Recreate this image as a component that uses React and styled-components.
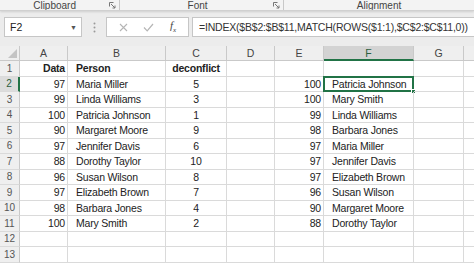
import React from "react";
import styled, { createGlobalStyle } from "styled-components";

const GlobalStyle = createGlobalStyle`
  html, body {
    margin: 0;
    padding: 0;
    background: #ececec;
    overflow: hidden;
  }
  * { box-sizing: border-box; }
`;

const Page = styled.div`
  width: 474px;
  height: 263px;
  overflow: hidden;
  font-family: "Liberation Sans", Arial, sans-serif;
  background: #ececec;
`;

const Ribbon = styled.div`
  height: 11px;
  background: #f3f3f3;
  border-bottom: 1px solid #d0d0d0;
  box-shadow: 0 1px 2px rgba(0, 0, 0, 0.12);
  display: flex;
  align-items: flex-end;
  overflow: hidden;
`;

const Group = styled.div`
  width: ${(p) => p.width}px;
  height: 11px;
  position: relative;
  display: flex;
  align-items: flex-end;
  justify-content: center;
  padding-right: ${(p) => p.shift || 0}px;
  border-right: ${(p) => (p.sep ? "1px solid #c8c8c8" : "none")};
`;

const GroupLabel = styled.span`
  font-size: 10px;
  line-height: 10px;
  color: #444;
  transform: translateY(1px);
`;

const Launcher = styled.span`
  position: absolute;
  right: 3px;
  bottom: 1px;
  display: flex;
`;

const FormulaBar = styled.div`
  height: 35px;
  display: flex;
  align-items: flex-start;
  padding: 6px 0 0 4px;
`;

const NameBox = styled.div`
  width: 78px;
  height: 20px;
  background: #fff;
  border: 1px solid #c6c6c6;
  display: flex;
  align-items: center;
  justify-content: space-between;
  padding: 0 4px 0 5px;
  font-size: 10.5px;
  color: #222;
`;

const Caret = styled.span`
  font-size: 7px;
  color: #555;
`;

const Dots = styled.div`
  width: 24px;
  height: 20px;
  display: flex;
  align-items: center;
  justify-content: center;
`;

const ButtonBox = styled.div`
  width: 83px;
  height: 20px;
  background: #fff;
  border: 1px solid #c6c6c6;
  display: flex;
  align-items: center;
  justify-content: space-around;
  padding: 0 4px;
  margin-right: 3px;
`;

const Fx = styled.span`
  font-family: "Liberation Serif", serif;
  font-style: italic;
  font-size: 11px;
  color: #444;
  & sub { font-size: 7px; }
`;

const FormulaInput = styled.div`
  flex: 1;
  height: 20px;
  background: #fff;
  border: 1px solid #c6c6c6;
  border-right: none;
  display: flex;
  align-items: center;
  padding-left: 6px;
  font-size: 10.5px;
  letter-spacing: -0.2px;
  color: #333;
  white-space: nowrap;
`;

const Sheet = styled.div`
  display: grid;
  grid-template-columns: 20px 48px 98px 61px 48px 49px 90px 50px 1fr;
  grid-template-rows: 15px repeat(13, 15.5px);
  background: #fff;
`;

const ColHead = styled.div`
  background: ${(p) => (p.active ? "#d3d3d3" : "#efefef")};
  border-right: 1px solid #c9c9c9;
  border-bottom: ${(p) => (p.active ? "2px solid #217346" : "1px solid #c9c9c9")};
  color: ${(p) => (p.active ? "#2b5e40" : "#444")};
  font-size: 10.5px;
  display: flex;
  align-items: center;
  justify-content: center;
`;

const Corner = styled.div`
  background: #efefef;
  border-right: 1px solid #c9c9c9;
  border-bottom: 1px solid #c9c9c9;
  display: flex;
  align-items: flex-end;
  justify-content: flex-end;
  padding: 0 2px 2px 0;
`;

const RowHead = styled.div`
  background: ${(p) => (p.active ? "#dcdcdc" : "#efefef")};
  border-right: ${(p) => (p.active ? "2px solid #217346" : "1px solid #c9c9c9")};
  border-bottom: 1px solid #dadada;
  color: ${(p) => (p.active ? "#2b5e40" : "#555")};
  font-size: 10px;
  display: flex;
  align-items: center;
  justify-content: center;
`;

const Cell = styled.div`
  position: relative;
  border-right: 1px solid #dadada;
  border-bottom: 1px solid #dadada;
  font-size: 10.5px;
  letter-spacing: -0.2px;
  color: #222;
  font-weight: ${(p) => (p.bold ? 700 : 400)};
  display: flex;
  align-items: center;
  justify-content: ${(p) =>
    p.align === "right" ? "flex-end" : p.align === "center" ? "center" : "flex-start"};
  padding: ${(p) => (p.align === "left" ? "0 2px 0 8px" : "0 2px")};
  white-space: nowrap;
  overflow: visible;
`;

const Selection = styled.div`
  position: absolute;
  left: -1px;
  top: -1px;
  right: -1px;
  bottom: -1px;
  border: 2px solid #217346;
  pointer-events: none;
`;

const Handle = styled.div`
  position: absolute;
  right: -4px;
  bottom: -4px;
  width: 5px;
  height: 5px;
  background: #217346;
  border: 1px solid #fff;
`;

const cols = ["A", "B", "C", "D", "E", "F", "G", ""];
const align = ["right", "left", "center", "left", "right", "left", "left", "left"];

const dataA = [97, 99, 100, 90, 97, 88, 96, 97, 98, 100];
const dataB = [
  "Maria Miller",
  "Linda Williams",
  "Patricia Johnson",
  "Margaret Moore",
  "Jennifer Davis",
  "Dorothy Taylor",
  "Susan Wilson",
  "Elizabeth Brown",
  "Barbara Jones",
  "Mary Smith",
];
const dataC = [5, 3, 1, 9, 6, 10, 8, 7, 4, 2];
const dataE = [100, 100, 99, 98, 97, 97, 97, 96, 90, 88];
const dataF = [
  "Patricia Johnson",
  "Mary Smith",
  "Linda Williams",
  "Barbara Jones",
  "Maria Miller",
  "Jennifer Davis",
  "Elizabeth Brown",
  "Susan Wilson",
  "Margaret Moore",
  "Dorothy Taylor",
];

const rowValues = (r) => {
  if (r === 1) return ["Data", "Person", "deconflict", "", "", "", "", ""];
  const i = r - 2;
  if (i < 10) return [dataA[i], dataB[i], dataC[i], "", dataE[i], dataF[i], "", ""];
  return ["", "", "", "", "", "", "", ""];
};

const LauncherIcon = () => (
  <svg width="7" height="7" viewBox="0 0 7 7">
    <path d="M0.5 0.5h4M0.5 0.5v4" stroke="#777" strokeWidth="1" fill="none" />
    <path d="M2 2l4 4M6 3.5V6H3.5" stroke="#777" strokeWidth="1" fill="none" />
  </svg>
);

const App = () => {
  const rows = Array.from({ length: 13 }, (_, i) => i + 1);
  return (
    <Page>
      <GlobalStyle />
      <Ribbon>
        <Group width={126} shift={10} sep>
          <GroupLabel>Clipboard</GroupLabel>
          <Launcher>
            <LauncherIcon />
          </Launcher>
        </Group>
        <Group width={172} shift={8} sep>
          <GroupLabel>Font</GroupLabel>
          <Launcher>
            <LauncherIcon />
          </Launcher>
        </Group>
        <Group width={200}>
          <GroupLabel>Alignment</GroupLabel>
        </Group>
      </Ribbon>
      <FormulaBar>
        <NameBox>
          <span>F2</span>
          <Caret>▼</Caret>
        </NameBox>
        <Dots>
          <svg width="3" height="11" viewBox="0 0 3 11">
            <circle cx="1.5" cy="1.5" r="1" fill="#999" />
            <circle cx="1.5" cy="5.5" r="1" fill="#999" />
            <circle cx="1.5" cy="9.5" r="1" fill="#999" />
          </svg>
        </Dots>
        <ButtonBox>
          <svg width="9" height="9" viewBox="0 0 9 9">
            <path d="M1 1l7 7M8 1l-7 7" stroke="#b5b5b5" strokeWidth="1.1" />
          </svg>
          <svg width="11" height="9" viewBox="0 0 11 9">
            <path d="M1 4.5l3.2 3.3L10 1" stroke="#b5b5b5" strokeWidth="1.2" fill="none" />
          </svg>
          <Fx>
            f<sub>x</sub>
          </Fx>
        </ButtonBox>
        <FormulaInput>=INDEX($B$2:$B$11,MATCH(ROWS($1:1),$C$2:$C$11,0))</FormulaInput>
      </FormulaBar>
      <Sheet>
        <Corner>
          <svg width="9" height="9" viewBox="0 0 9 9">
            <path d="M9 0V9H0Z" fill="#c4c4c4" />
          </svg>
        </Corner>
        {cols.map((c, i) => (
          <ColHead key={"h" + i} active={c === "F"}>
            {c}
          </ColHead>
        ))}
        {rows.map((r) => (
          <React.Fragment key={r}>
            <RowHead active={r === 2}>{r}</RowHead>
            {rowValues(r).map((v, ci) => (
              <Cell key={ci} align={align[ci]} bold={r === 1}>
                {v}
                {r === 2 && ci === 5 && (
                  <Selection>
                    <Handle />
                  </Selection>
                )}
              </Cell>
            ))}
          </React.Fragment>
        ))}
      </Sheet>
    </Page>
  );
};

export default App;
